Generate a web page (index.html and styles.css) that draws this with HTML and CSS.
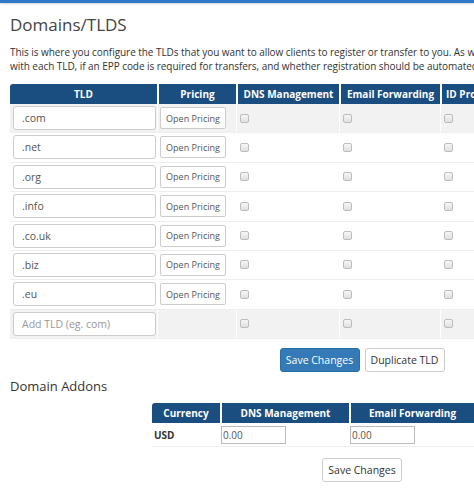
FILE: index.html
```html
<!DOCTYPE html>
<html>
<head>
<meta charset="utf-8">
<link rel="stylesheet" href="styles.css">
</head>
<body>
<div class="topbar"></div>
<div class="viewport">
  <div class="page">
    <h1 class="title">Domains/TLDS</h1>
    <p class="intro">This is where you configure the TLDs that you want to allow clients to register or transfer to you. As well as pricing, you can set which addons are offered<br>with each TLD, if an EPP code is required for transfers, and whether registration should be automated and if so, with which registrar.</p>

    <table class="grid tlds">
      <colgroup>
        <col class="c-tld"><col class="c-pricing"><col class="c-dns"><col class="c-email"><col class="c-id"><col class="c-epp"><col class="c-auto">
      </colgroup>
      <thead>
        <tr>
          <th>TLD</th>
          <th>Pricing</th>
          <th>DNS Management</th>
          <th>Email Forwarding</th>
          <th>ID Protection</th>
          <th>EPP Code</th>
          <th>Auto Registration</th>
        </tr>
      </thead>
      <tbody>
        <tr class="alt">
          <td><input class="tld-input" type="text" value=".com"></td>
          <td><button class="btn-pricing">Open Pricing</button></td>
          <td><input class="cb" type="checkbox"></td>
          <td><input class="cb" type="checkbox"></td>
          <td><input class="cb" type="checkbox"></td>
          <td><input class="cb" type="checkbox"></td>
          <td></td>
        </tr>
        <tr>
          <td><input class="tld-input" type="text" value=".net"></td>
          <td><button class="btn-pricing">Open Pricing</button></td>
          <td><input class="cb" type="checkbox"></td>
          <td><input class="cb" type="checkbox"></td>
          <td><input class="cb" type="checkbox"></td>
          <td><input class="cb" type="checkbox"></td>
          <td></td>
        </tr>
        <tr>
          <td><input class="tld-input" type="text" value=".org"></td>
          <td><button class="btn-pricing">Open Pricing</button></td>
          <td><input class="cb" type="checkbox"></td>
          <td><input class="cb" type="checkbox"></td>
          <td><input class="cb" type="checkbox"></td>
          <td><input class="cb" type="checkbox"></td>
          <td></td>
        </tr>
        <tr>
          <td><input class="tld-input" type="text" value=".info"></td>
          <td><button class="btn-pricing">Open Pricing</button></td>
          <td><input class="cb" type="checkbox"></td>
          <td><input class="cb" type="checkbox"></td>
          <td><input class="cb" type="checkbox"></td>
          <td><input class="cb" type="checkbox"></td>
          <td></td>
        </tr>
        <tr>
          <td><input class="tld-input" type="text" value=".co.uk"></td>
          <td><button class="btn-pricing">Open Pricing</button></td>
          <td><input class="cb" type="checkbox"></td>
          <td><input class="cb" type="checkbox"></td>
          <td><input class="cb" type="checkbox"></td>
          <td><input class="cb" type="checkbox"></td>
          <td></td>
        </tr>
        <tr>
          <td><input class="tld-input" type="text" value=".biz"></td>
          <td><button class="btn-pricing">Open Pricing</button></td>
          <td><input class="cb" type="checkbox"></td>
          <td><input class="cb" type="checkbox"></td>
          <td><input class="cb" type="checkbox"></td>
          <td><input class="cb" type="checkbox"></td>
          <td></td>
        </tr>
        <tr>
          <td><input class="tld-input" type="text" value=".eu"></td>
          <td><button class="btn-pricing">Open Pricing</button></td>
          <td><input class="cb" type="checkbox"></td>
          <td><input class="cb" type="checkbox"></td>
          <td><input class="cb" type="checkbox"></td>
          <td><input class="cb" type="checkbox"></td>
          <td></td>
        </tr>
        <tr class="alt">
          <td><input class="tld-input" type="text" placeholder="Add TLD (eg. com)"></td>
          <td></td>
          <td><input class="cb" type="checkbox"></td>
          <td><input class="cb" type="checkbox"></td>
          <td><input class="cb" type="checkbox"></td>
          <td><input class="cb" type="checkbox"></td>
          <td></td>
        </tr>
      </tbody>
    </table>

    <div class="actions actions-main">
      <button class="btn btn-primary">Save Changes</button>
      <button class="btn btn-default">Duplicate TLD</button>
    </div>

    <h2 class="subtitle">Domain Addons</h2>

    <table class="grid addons">
      <colgroup>
        <col class="a-cur"><col class="a-dns"><col class="a-email"><col class="a-id">
      </colgroup>
      <thead>
        <tr>
          <th>Currency</th>
          <th>DNS Management</th>
          <th>Email Forwarding</th>
          <th>ID Protection</th>
        </tr>
      </thead>
      <tbody>
        <tr>
          <td class="cur">USD</td>
          <td><input class="price-input" type="text" value="0.00"></td>
          <td><input class="price-input" type="text" value="0.00"></td>
          <td><input class="price-input" type="text" value="0.00"></td>
        </tr>
      </tbody>
    </table>

    <div class="actions actions-addons">
      <button class="btn btn-default">Save Changes</button>
    </div>
  </div>
</div>
</body>
</html>
```

FILE: styles.css
```css
html, body {
  margin: 0;
  padding: 0;
  background: #fff;
  overflow: hidden;
}

body {
  font-family: "Open Sans", "Liberation Sans", sans-serif;
  color: #333;
}

.topbar {
  height: 3px;
  background: #2e78c8;
  box-shadow: 0 1px 2px rgba(0, 0, 0, 0.18);
}

.viewport {
  width: 474px;
  overflow: hidden;
}

.page {
  width: 704px;
  padding: 0 10px;
}

.title {
  margin: 11px 0 0;
  font-size: 17px;
  font-weight: 400;
  color: #444;
  line-height: 22px;
}

.intro {
  margin: 10px 0 0;
  font-size: 10px;
  letter-spacing: -0.05px;
  line-height: 13.5px;
  color: #333;
  white-space: nowrap;
}

.grid {
  border-collapse: separate;
  border-spacing: 0;
  table-layout: fixed;
  font-size: 10px;
}

.grid th {
  box-sizing: border-box;
  background: #1a4d80;
  color: #fff;
  font-weight: 700;
  height: 20px;
  padding: 0 2px;
  text-align: center;
  white-space: nowrap;
  overflow: hidden;
}

.grid th + th {
  border-left: 2px solid #fff;
}

.grid th:first-child {
  border-top-left-radius: 3px;
}

.tlds {
  width: 704px;
  margin-top: 11px;
}

.c-tld { width: 147px; }
.c-pricing { width: 79px; }
.c-dns { width: 103px; }
.c-email { width: 101px; }
.c-id { width: 76px; }
.c-epp { width: 90px; }
.c-auto { width: 108px; }

.tlds td {
  height: 24px;
  padding: 2px 1px 2.4px 3px;
  border-bottom: 1px solid #eee;
  vertical-align: middle;
}

.tlds td + td {
  border-left: 1px solid #fff;
  padding-left: 3px;
}

.tlds tr.alt td {
  background: #f2f2f2;
}

.tld-input {
  box-sizing: border-box;
  display: block;
  width: 143px;
  height: 24px;
  margin: 0;
  padding: 0 8px;
  border: 1px solid #ccc;
  border-radius: 3px;
  background: #fff;
  font-family: "Open Sans", "Liberation Sans", sans-serif;
  font-size: 10.5px;
  color: #555;
}

.tld-input::placeholder {
  color: #999;
}

.btn-pricing {
  box-sizing: border-box;
  display: block;
  width: 66px;
  height: 22px;
  margin: 0 0 0 -1px;
  padding: 0;
  border: 1px solid #ccc;
  border-radius: 2px;
  background: #fff;
  font-family: "Open Sans", "Liberation Sans", sans-serif;
  font-size: 9px;
  color: #555;
  white-space: nowrap;
}

.cb {
  -webkit-appearance: none;
  appearance: none;
  display: block;
  width: 9px;
  height: 9px;
  margin: 0;
  border: 1px solid #bdbdbd;
  border-radius: 2px;
  background: linear-gradient(#f6f6f6, #e0e0e0);
  box-sizing: border-box;
}

.actions {
  display: flex;
  justify-content: center;
  gap: 5px;
}

.actions-main {
  margin-top: 9px;
}

.btn {
  box-sizing: border-box;
  width: 80px;
  height: 24px;
  margin: 0;
  padding: 0;
  border-radius: 3px;
  font-family: "Open Sans", "Liberation Sans", sans-serif;
  font-size: 10.5px;
  white-space: nowrap;
}

.btn-primary {
  background: #337ab7;
  border: 1px solid #2e6da4;
  color: #fff;
}

.btn-default {
  background: #fff;
  border: 1px solid #ccc;
  color: #333;
}

.subtitle {
  margin: 5px 0 0;
  font-size: 13px;
  font-weight: 400;
  color: #333;
  line-height: 18px;
}

.addons {
  width: 420px;
  margin: 8px auto 0;
}

.a-cur { width: 68px; }
.a-dns { width: 129px; }
.a-email { width: 125px; }
.a-id { width: 98px; }

.addons td {
  height: 23px;
  padding: 0 1px;
  border-bottom: 1px solid #eee;
  vertical-align: middle;
}

.addons td.cur {
  padding-left: 2px;
  font-weight: 700;
  font-size: 10px;
  color: #333;
}

.price-input {
  box-sizing: border-box;
  display: block;
  width: 65px;
  height: 18px;
  margin: 0;
  padding: 0 1px;
  border: 1px solid #bbb;
  border-radius: 0;
  font-family: "Open Sans", "Liberation Sans", sans-serif;
  font-size: 10px;
  color: #555;
}

.actions-addons {
  margin-top: 11px;
}
```
